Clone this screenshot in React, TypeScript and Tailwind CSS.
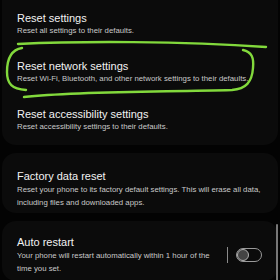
const font = { fontFamily: '"Liberation Sans", Arial, sans-serif' };

function Item({ title, sub }: { title: string; sub: string }) {
  return (
    <div className="px-[15px]">
      <p className="text-[11px] leading-[14px] text-[#f2f2f2]">{title}</p>
      <p className="text-[7.8px] leading-[12px] text-[#c9c9c9]">{sub}</p>
    </div>
  );
}

export default function App() {
  return (
    <div className="relative w-[280px] h-[280px] overflow-hidden bg-[#030303]" style={font}>
      <div className="flex flex-col gap-[8px] px-[2px]">
        <div className="flex flex-col gap-[22px] rounded-b-[14px] bg-[#0b0b0b] pt-[11px] pb-[12px]">
          <Item title="Reset settings" sub="Reset all settings to their defaults." />
          <Item title="Reset network settings" sub="Reset Wi-Fi, Bluetooth, and other network settings to their defaults." />
          <Item title="Reset accessibility settings" sub="Reset accessibility settings to their defaults." />
        </div>
        <div className="rounded-[14px] bg-[#0b0b0b] pt-[16px] pb-[4px]">
          <div className="px-[15px]">
            <p className="text-[11px] leading-[14px] text-[#f2f2f2]">Factory data reset</p>
            <p className="text-[7.8px] leading-[13px] text-[#c9c9c9]">
              Reset your phone to its factory default settings. This will erase all data, including files and downloaded apps.
            </p>
          </div>
        </div>
        <div className="flex items-center rounded-[14px] bg-[#0b0b0b] pt-[14px] pb-[6px] pl-[15px] pr-[16px]">
          <div className="flex-1 pr-[12px]">
            <p className="text-[11px] leading-[14px] text-[#f2f2f2]">Auto restart</p>
            <p className="text-[7.8px] leading-[13px] text-[#c9c9c9]">
              Your phone will restart automatically within 1 hour of the time you set.
            </p>
          </div>
          <div className="h-[16px] w-px bg-[#8a8a8a] mr-[8px]" />
          <div className="flex h-[14px] w-[26px] items-center rounded-full border border-[#9a9a9a]">
            <div className="h-[12px] w-[12px] rounded-full border border-[#b0b0b0] bg-[#444]" />
          </div>
        </div>
      </div>
      <div className="absolute right-[2px] top-[224px] h-[60px] w-[2px] rounded-full bg-[#777]" />
      <svg className="absolute left-0 top-0" width="280" height="280" viewBox="0 0 280 280" fill="none">
        <g stroke="#82d93c" strokeWidth="2.4" strokeLinecap="round">
          <path d="M18 44 C 80 41, 180 41, 266 47" />
          <path d="M243 50 C 252 52, 254 58, 253 68 C 252 82, 246 89, 232 90 C 160 92, 80 91, 24 97" />
          <path d="M22 48 C 10 50, 7 60, 7 72 C 7 84, 12 89, 26 90" />
        </g>
      </svg>
    </div>
  );
}
